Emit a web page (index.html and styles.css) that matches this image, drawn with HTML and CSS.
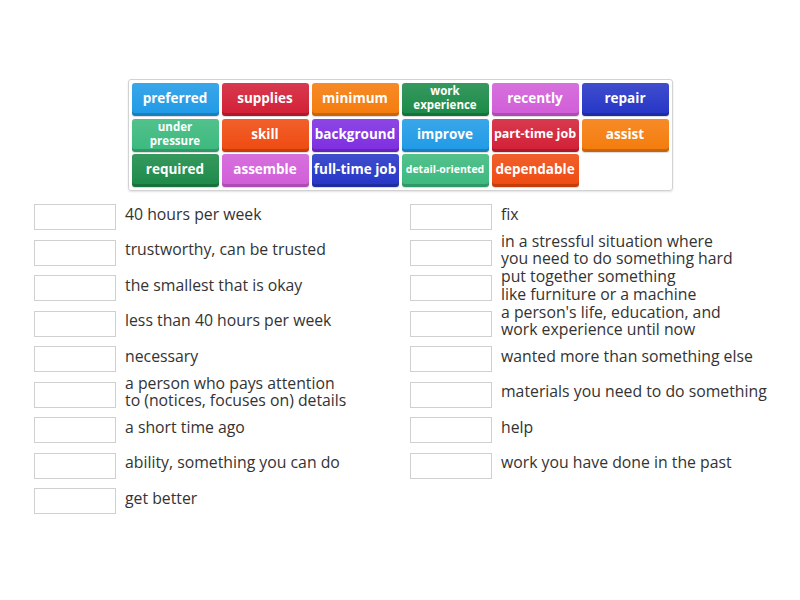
FILE: index.html
```html
<!DOCTYPE html>
<html lang="en">
<head>
    <meta charset="UTF-8">
    <title>Match up</title>
    <link rel="stylesheet" href="styles.css">
</head>
<body>
    <div class="page">
        <div class="bank">
            <div class="tile c-sky">preferred</div>
            <div class="tile c-red">supplies</div>
            <div class="tile c-orange">minimum</div>
            <div class="tile c-green small">work<br>experience</div>
            <div class="tile c-orchid">recently</div>
            <div class="tile c-navy">repair</div>

            <div class="tile c-mint small">under<br>pressure</div>
            <div class="tile c-flame">skill</div>
            <div class="tile c-purple">background</div>
            <div class="tile c-sky">improve</div>
            <div class="tile c-red mid">part-time job</div>
            <div class="tile c-orange">assist</div>

            <div class="tile c-green">required</div>
            <div class="tile c-orchid">assemble</div>
            <div class="tile c-navy">full-time job</div>
            <div class="tile c-mint tiny">detail-oriented</div>
            <div class="tile c-flame">dependable</div>
        </div>

        <div class="answers">
            <div class="column">
                <div class="row"><div class="slot"></div><div class="clue">40 hours per week</div></div>
                <div class="row"><div class="slot"></div><div class="clue">trustworthy, can be trusted</div></div>
                <div class="row"><div class="slot"></div><div class="clue">the smallest that is okay</div></div>
                <div class="row"><div class="slot"></div><div class="clue">less than 40 hours per week</div></div>
                <div class="row"><div class="slot"></div><div class="clue">necessary</div></div>
                <div class="row"><div class="slot"></div><div class="clue">a person who pays attention<br>to (notices, focuses on) details</div></div>
                <div class="row"><div class="slot"></div><div class="clue">a short time ago</div></div>
                <div class="row"><div class="slot"></div><div class="clue">ability, something you can do</div></div>
                <div class="row"><div class="slot"></div><div class="clue">get better</div></div>
            </div>
            <div class="column">
                <div class="row"><div class="slot"></div><div class="clue">fix</div></div>
                <div class="row"><div class="slot"></div><div class="clue">in a stressful situation where<br>you need to do something hard</div></div>
                <div class="row"><div class="slot"></div><div class="clue">put together something<br>like furniture or a machine</div></div>
                <div class="row"><div class="slot"></div><div class="clue">a person's life, education, and<br>work experience until now</div></div>
                <div class="row"><div class="slot"></div><div class="clue">wanted more than something else</div></div>
                <div class="row"><div class="slot"></div><div class="clue">materials you need to do something</div></div>
                <div class="row"><div class="slot"></div><div class="clue">help</div></div>
                <div class="row"><div class="slot"></div><div class="clue">work you have done in the past</div></div>
            </div>
        </div>
    </div>
</body>
</html>
```

FILE: styles.css
```css
body {
    margin: 0;
    font-family: "Open Sans", sans-serif;
    background: #fff;
    color: #333;
}
.page {
    width: 800px;
    height: 600px;
    padding-top: 79px;
    box-sizing: border-box;
}
/* word bank */
.bank {
    width: 545px;
    margin: 0 auto;
    box-sizing: border-box;
    padding: 3px;
    border: 1px solid #d2d2d2;
    border-radius: 3px;
    box-shadow: 0 1px 2px rgba(0, 0, 0, 0.12);
    display: grid;
    grid-template-columns: repeat(6, 87px);
    grid-auto-rows: 33px;
    column-gap: 3px;
    row-gap: 2.5px;
}
.tile {
    display: flex;
    align-items: center;
    justify-content: center;
    text-align: center;
    color: #fff;
    font-weight: 700;
    font-size: 13.5px;
    line-height: 16px;
    border-radius: 3px;
    box-shadow: inset 0 -3px 0 rgba(0, 0, 0, 0.18), 0 1px 1px rgba(0, 0, 0, 0.15);
    background-image: linear-gradient(rgba(255, 255, 255, 0.12), rgba(255, 255, 255, 0));
    padding-bottom: 3px;
    box-sizing: border-box;
    white-space: nowrap;
}
.tile.small {
    font-size: 11.5px;
    line-height: 14px;
}
.tile.mid {
    font-size: 12.5px;
}
.tile.tiny {
    font-size: 10.5px;
}
.c-sky { background-color: #1f9ae6; }
.c-red { background-color: #d21f36; }
.c-orange { background-color: #f57b0b; }
.c-green { background-color: #1b8a48; }
.c-orchid { background-color: #d15dd8; }
.c-navy { background-color: #2535c6; }
.c-mint { background-color: #3bb97d; }
.c-flame { background-color: #ef4a0f; }
.c-purple { background-color: #7d2de0; }
/* answer rows */
.answers {
    display: flex;
    margin-top: 13px;
    padding-left: 34px;
}
.column {
    width: 376px;
    display: flex;
    flex-direction: column;
    row-gap: 9.5px;
}
.row {
    display: flex;
    align-items: center;
    height: 26px;
}
.slot {
    width: 82px;
    height: 26px;
    box-sizing: border-box;
    border: 1px solid #d0d0d0;
    background: #fff;
    flex-shrink: 0;
}
.clue {
    margin-left: 9px;
    font-size: 15.8px;
    line-height: 17.5px;
    color: #333;
    white-space: nowrap;
    margin-top: -5px;
}
```
